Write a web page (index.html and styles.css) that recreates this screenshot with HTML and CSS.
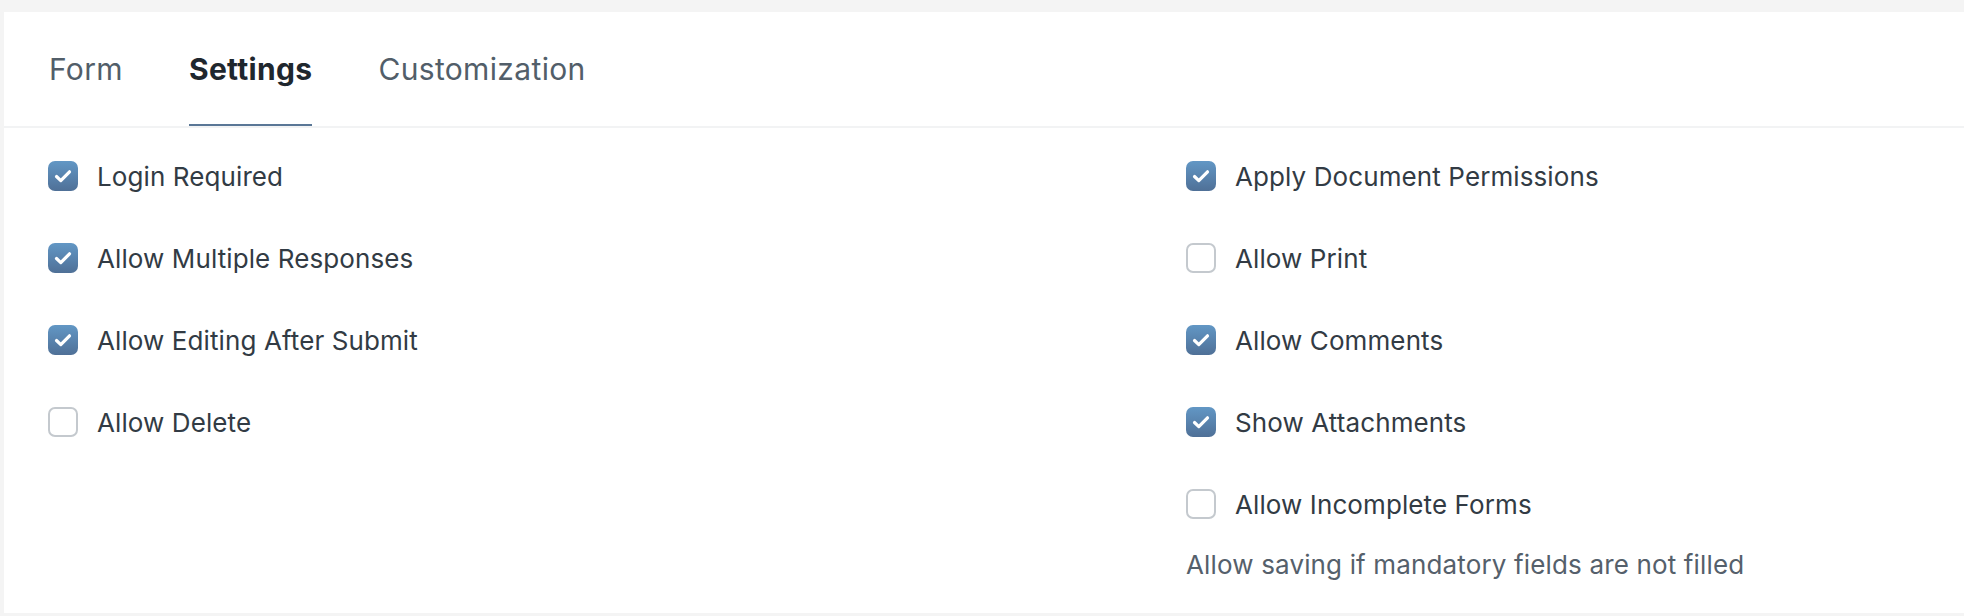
FILE: index.html
```html
<!DOCTYPE html>
<html lang="en">
<head>
<meta charset="utf-8">
<title>Web Form Settings</title>
<link rel="stylesheet" href="styles.css">
</head>
<body>
<div class="card">
  <nav class="tabs">
    <div class="tab">Form</div>
    <div class="tab active">Settings</div>
    <div class="tab">Customization</div>
  </nav>
  <div class="content">
    <div class="col">
      <label class="row"><span class="box checked"><svg viewBox="0 0 30 30"><polyline points="8.5,15.5 12.8,19.6 21.5,10.8"/></svg></span><span class="label">Login Required</span></label>
      <label class="row"><span class="box checked"><svg viewBox="0 0 30 30"><polyline points="8.5,15.5 12.8,19.6 21.5,10.8"/></svg></span><span class="label">Allow Multiple Responses</span></label>
      <label class="row"><span class="box checked"><svg viewBox="0 0 30 30"><polyline points="8.5,15.5 12.8,19.6 21.5,10.8"/></svg></span><span class="label">Allow Editing After Submit</span></label>
      <label class="row"><span class="box"></span><span class="label">Allow Delete</span></label>
    </div>
    <div class="col">
      <label class="row"><span class="box checked"><svg viewBox="0 0 30 30"><polyline points="8.5,15.5 12.8,19.6 21.5,10.8"/></svg></span><span class="label">Apply Document Permissions</span></label>
      <label class="row"><span class="box"></span><span class="label">Allow Print</span></label>
      <label class="row"><span class="box checked"><svg viewBox="0 0 30 30"><polyline points="8.5,15.5 12.8,19.6 21.5,10.8"/></svg></span><span class="label">Allow Comments</span></label>
      <label class="row"><span class="box checked"><svg viewBox="0 0 30 30"><polyline points="8.5,15.5 12.8,19.6 21.5,10.8"/></svg></span><span class="label">Show Attachments</span></label>
      <label class="row"><span class="box"></span><span class="label">Allow Incomplete Forms</span></label>
      <p class="help">Allow saving if mandatory fields are not filled</p>
    </div>
  </div>
</div>
</body>
</html>
```

FILE: styles.css
```css
* { box-sizing: border-box; }
html, body { margin: 0; padding: 0; }
body {
  background: #f4f4f4;
  font-family: Inter, "Noto Sans", sans-serif;
  padding: 12px 0 3px 4px;
}
.card {
  background: #ffffff;
  height: 601px;
}
.tabs {
  display: flex;
  gap: 66px;
  padding-left: 45px;
  height: 116px;
  border-bottom: 2px solid #f2f3f4;
}
.tab {
  display: flex;
  align-items: center;
  padding-top: 2px;
  font-size: 30px;
  letter-spacing: 0.35px;
  color: #525e69;
  border-bottom: 2px solid transparent;
}
.tab.active {
  color: #1f272e;
  font-weight: 700;
  letter-spacing: 0.3px;
  border-bottom-color: #5a7796;
}
.content {
  display: grid;
  grid-template-columns: 1138px 1fr;
  padding: 33px 0 0 44px;
}
.col {
  display: flex;
  flex-direction: column;
  gap: 52px;
}
.row {
  display: flex;
  align-items: center;
  gap: 19px;
  height: 30px;
}
.box {
  width: 30px;
  height: 30px;
  border-radius: 7px;
  border: 2px solid #c4c9ce;
  background: #fff;
  flex: none;
  display: flex;
}
.box.checked {
  border: none;
  background: linear-gradient(180deg, #6297c5 0%, #4f7097 100%);
}
.box svg {
  width: 30px;
  height: 30px;
}
.box polyline {
  fill: none;
  stroke: #ffffff;
  stroke-width: 3.2;
  stroke-linecap: round;
  stroke-linejoin: round;
}
.label {
  font-size: 26px;
  letter-spacing: 0.1px;
  color: #323b44;
}
.help {
  margin: -24px 0 0 0;
  font-size: 26px;
  letter-spacing: 0.15px;
  line-height: 36px;
  color: #55606b;
}
```
